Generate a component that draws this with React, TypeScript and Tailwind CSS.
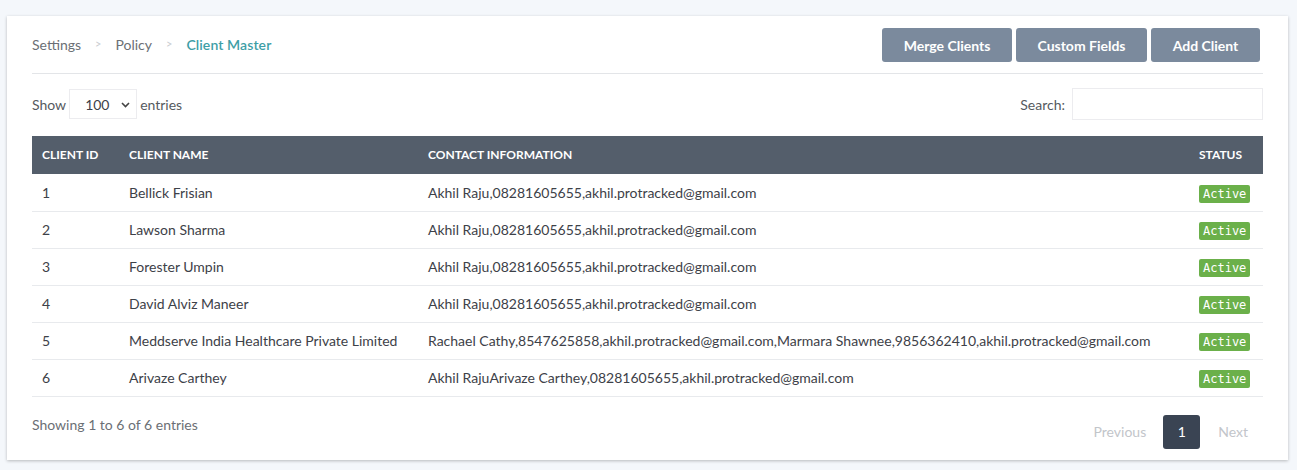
import React from "react";

const rows = [
  { id: 1, name: "Bellick Frisian", contact: "Akhil Raju,08281605655,akhil.protracked@gmail.com" },
  { id: 2, name: "Lawson Sharma", contact: "Akhil Raju,08281605655,akhil.protracked@gmail.com" },
  { id: 3, name: "Forester Umpin", contact: "Akhil Raju,08281605655,akhil.protracked@gmail.com" },
  { id: 4, name: "David Alviz Maneer", contact: "Akhil Raju,08281605655,akhil.protracked@gmail.com" },
  { id: 5, name: "Meddserve India Healthcare Private Limited", contact: "Rachael Cathy,8547625858,akhil.protracked@gmail.com,Marmara Shawnee,9856362410,akhil.protracked@gmail.com" },
  { id: 6, name: "Arivaze Carthey", contact: "Akhil RajuArivaze Carthey,08281605655,akhil.protracked@gmail.com" },
];

export default function App() {
  return (
    <div className="w-[1297px] h-[470px] bg-[#f4f7fb] pt-[16px] pl-[7px] font-['Lato','Noto_Sans',sans-serif] text-[14px] text-[#3d4148]">
      <div className="w-[1281px] h-[444px] bg-white shadow-[0_1px_3px_rgba(0,0,0,0.25)] px-[25px] pt-[12px]">
        <div className="flex items-center justify-between h-[34px]">
          <div className="flex items-center text-[14px] text-[#6b6f75] mb-[2px]">
            <span>Settings</span>
            <span className="mx-[14px] text-[#c9ccd0] text-[11px]">&gt;</span>
            <span>Policy</span>
            <span className="mx-[14px] text-[#c9ccd0] text-[11px]">&gt;</span>
            <span className="text-[#3d9ea6] font-semibold tracking-[0.1px]">Client Master</span>
          </div>
          <div className="flex gap-[4px] mr-[3px]">
            <button className="w-[130px] h-[34px] rounded-[3px] bg-[#7b8a9d] text-white font-bold text-[14px]">Merge Clients</button>
            <button className="w-[131px] h-[34px] rounded-[3px] bg-[#7b8a9d] text-white font-bold text-[14px]">Custom Fields</button>
            <button className="w-[109px] h-[34px] rounded-[3px] bg-[#7b8a9d] text-white font-bold text-[14px]">Add Client</button>
          </div>
        </div>
        <div className="mt-[11px] h-px bg-[#e3e5e8]" />
        <div className="flex items-center justify-between mt-[14px] h-[32px]">
          <div className="flex items-center gap-[3px] text-[#555a60]">
            <span>Show</span>
            <div className="w-[68px] h-[30px] border border-[#ececef] flex items-center pl-[15px] pr-[6px] justify-between text-[#3d4148]">
              <span>100</span>
              <svg width="9" height="6" viewBox="0 0 9 6" className="mt-[1px]"><path d="M1 1l3.5 3.5L8 1" fill="none" stroke="#444" strokeWidth="1.6" /></svg>
            </div>
            <span>entries</span>
          </div>
          <div className="flex items-center gap-[7px] text-[#555a60]">
            <span>Search:</span>
            <div className="w-[191px] h-[32px] border border-[#ececef]" />
          </div>
        </div>
        <table className="w-full mt-[16px] border-collapse">
          <thead>
            <tr className="bg-[#545e6b] text-white text-[12px] font-bold h-[38px]">
              <th className="w-[87px] text-left pl-[10px] font-bold">CLIENT ID</th>
              <th className="w-[299px] text-left pl-[10px] font-bold">CLIENT NAME</th>
              <th className="text-left pl-[10px] font-bold">CONTACT INFORMATION</th>
              <th className="w-[74px] text-left pl-[10px] font-bold">STATUS</th>
            </tr>
          </thead>
          <tbody>
            {rows.map((r) => (
              <tr key={r.id} className="h-[37px] border-b border-[#e8eaed]">
                <td className="pl-[10px]">{r.id}</td>
                <td className="pl-[10px]">{r.name}</td>
                <td className="pl-[10px]">{r.contact}</td>
                <td className="pl-[10px]">
                  <span className="inline-block bg-[#6bb04a] text-white rounded-[2px] px-[4px] h-[18px] leading-[18px] mt-[2px] text-[12px] font-['DejaVu_Sans_Mono',monospace]">Active</span>
                </td>
              </tr>
            ))}
          </tbody>
        </table>
        <div className="flex items-start justify-between mt-[18px]">
          <span className="text-[#6b6f75] leading-[20px]">Showing 1 to 6 of 6 entries</span>
          <div className="flex items-center mr-[15px]">
            <span className="text-[#c2c5ca] mr-[17px]">Previous</span>
            <span className="w-[37px] h-[34px] rounded-[3px] bg-[#3a4453] text-white flex items-center justify-center">1</span>
            <span className="text-[#c2c5ca] ml-[18px]">Next</span>
          </div>
        </div>
      </div>
    </div>
  );
}
